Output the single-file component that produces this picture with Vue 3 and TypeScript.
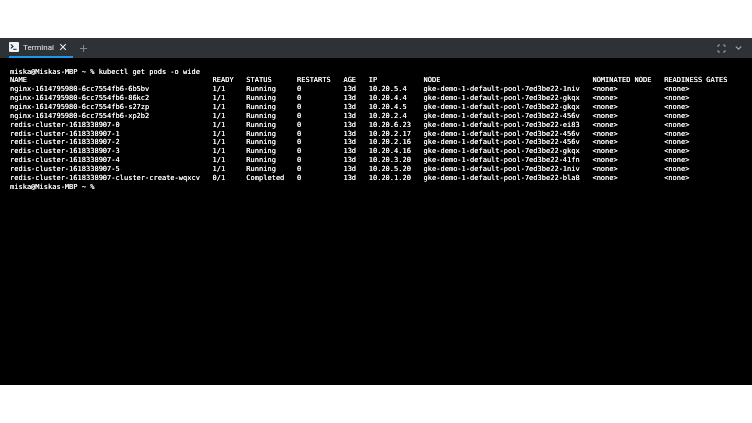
<script setup lang="ts">
const widths = [48, 8, 12, 11, 6, 13, 40, 17, 0]
const rows: string[][] = [
  ['NAME', 'READY', 'STATUS', 'RESTARTS', 'AGE', 'IP', 'NODE', 'NOMINATED NODE', 'READINESS GATES'],
  ['nginx-1614795980-6cc7554fb6-6b5bv', '1/1', 'Running', '0', '13d', '10.20.5.4', 'gke-demo-1-default-pool-7ed3be22-1niv', '<none>', '<none>'],
  ['nginx-1614795980-6cc7554fb6-86kc2', '1/1', 'Running', '0', '13d', '10.20.4.4', 'gke-demo-1-default-pool-7ed3be22-gkqx', '<none>', '<none>'],
  ['nginx-1614795980-6cc7554fb6-s27zp', '1/1', 'Running', '0', '13d', '10.20.4.5', 'gke-demo-1-default-pool-7ed3be22-gkqx', '<none>', '<none>'],
  ['nginx-1614795980-6cc7554fb6-xp2b2', '1/1', 'Running', '0', '13d', '10.20.2.4', 'gke-demo-1-default-pool-7ed3be22-456v', '<none>', '<none>'],
  ['redis-cluster-1618338907-0', '1/1', 'Running', '0', '13d', '10.20.6.23', 'gke-demo-1-default-pool-7ed3be22-ei83', '<none>', '<none>'],
  ['redis-cluster-1618338907-1', '1/1', 'Running', '0', '13d', '10.20.2.17', 'gke-demo-1-default-pool-7ed3be22-456v', '<none>', '<none>'],
  ['redis-cluster-1618338907-2', '1/1', 'Running', '0', '13d', '10.20.2.16', 'gke-demo-1-default-pool-7ed3be22-456v', '<none>', '<none>'],
  ['redis-cluster-1618338907-3', '1/1', 'Running', '0', '13d', '10.20.4.16', 'gke-demo-1-default-pool-7ed3be22-gkqx', '<none>', '<none>'],
  ['redis-cluster-1618338907-4', '1/1', 'Running', '0', '13d', '10.20.3.20', 'gke-demo-1-default-pool-7ed3be22-41fn', '<none>', '<none>'],
  ['redis-cluster-1618338907-5', '1/1', 'Running', '0', '13d', '10.20.5.20', 'gke-demo-1-default-pool-7ed3be22-1niv', '<none>', '<none>'],
  ['redis-cluster-1618338907-cluster-create-wqxcv', '0/1', 'Completed', '0', '13d', '10.20.1.20', 'gke-demo-1-default-pool-7ed3be22-bla8', '<none>', '<none>'],
]
const lines: string[] = [
  'miska@Miskas-MBP ~ % kubectl get pods -o wide',
  ...rows.map((r) => r.map((c, i) => c.padEnd(widths[i])).join('')),
  'miska@Miskas-MBP ~ %',
]
</script>

<template>
  <div class="page">
    <div class="window">
      <header class="bar">
        <div class="tab">
          <svg class="term-icon" width="12" height="12" viewBox="0 0 12 12">
            <rect x="1" y="1" width="10" height="10" rx="1" fill="#f1f3f4" />
            <path d="M2.8 3.4 L5 5.4 L2.8 7.4" fill="none" stroke="#202124" stroke-width="1.1" />
            <path d="M5.2 8.3 H8.6" stroke="#202124" stroke-width="1" />
          </svg>
          <span class="tab-title">Terminal</span>
          <svg class="close" width="8" height="8" viewBox="0 0 8 8">
            <path d="M1.2 1.2 L6.8 6.8 M6.8 1.2 L1.2 6.8" stroke="#e8eaed" stroke-width="1.1" />
          </svg>
        </div>
        <svg class="plus" width="9" height="9" viewBox="0 0 9 9">
          <path d="M4.5 1 V8 M1 4.5 H8" stroke="#80868b" stroke-width="1" />
        </svg>
        <div class="actions">
          <svg width="9" height="9" viewBox="0 0 9 9">
            <path d="M1 3 V1 H3 M6 1 H8 V3 M8 6 V8 H6 M3 8 H1 V6" fill="none" stroke="#9aa0a6" stroke-width="1" />
          </svg>
          <svg width="7" height="6" viewBox="0 0 7 6">
            <path d="M0.8 1.5 L3.5 4.2 L6.2 1.5" fill="none" stroke="#9aa0a6" stroke-width="1.1" />
          </svg>
        </div>
      </header>
      <main class="terminal">
        <div class="screen">
          <pre v-for="(line, i) in lines" :key="i" class="line">{{ line }}</pre>
        </div>
      </main>
    </div>
  </div>
</template>

<style scoped>
.page {
  width: 752px;
  height: 423px;
  background: #fff;
  padding-top: 38px;
  box-sizing: border-box;
}
.window {
  display: flex;
  flex-direction: column;
  height: 347px;
}
.bar {
  height: 20px;
  flex: none;
  background: #2e3135;
  display: flex;
  align-items: center;
  padding-left: 8px;
  padding-right: 10px;
}
.tab {
  width: 64px;
  height: 20px;
  box-sizing: border-box;
  border-bottom: 2px solid #1a9be8;
  margin-left: 1px;
  display: flex;
  align-items: center;
  color: #e8eaed;
  font: 8px "Roboto", sans-serif;
}
.term-icon {
  margin-left: -1px;
  flex: none;
}
.tab-title {
  margin-left: 3px;
  white-space: nowrap;
  filter: blur(0.2px);
}
.close {
  margin-left: 5px;
  flex: none;
}
.plus {
  margin-left: 6px;
  flex: none;
}
.actions {
  margin-left: auto;
  display: flex;
  align-items: center;
  gap: 9px;
}
.terminal {
  flex: 1;
  background: #000;
  padding: 9.5px 0 0 10px;
  overflow: hidden;
}
.screen {
  filter: blur(0.25px);
}
.line {
  margin: 0;
  height: 8.87px;
  line-height: 8.87px;
  font-family: "DejaVu Sans Mono", "Liberation Mono", monospace;
  font-size: 7px;
  letter-spacing: 0.006px;
  color: #f8f9fa;
  text-shadow: 0 0 0.5px #fff;
  white-space: pre;
}
</style>
